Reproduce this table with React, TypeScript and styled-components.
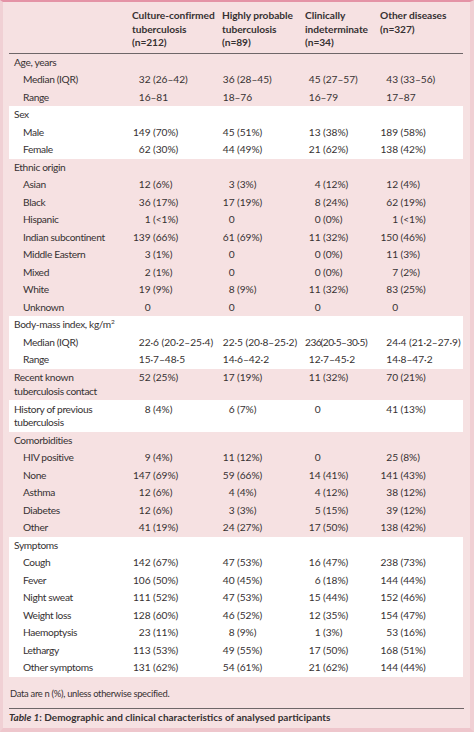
import React from "react";
import styled, { createGlobalStyle } from "styled-components";

const Global = createGlobalStyle`
  html, body { margin: 0; padding: 0; background: #f6e1e2; }
  * { box-sizing: border-box; }
`;

const PINK = "#f6e1e2";
const TEXT = "#363132";
const FONT = `Lato, "Liberation Sans", Arial, sans-serif`;

const Page = styled.div`
  width: 474px;
  height: 732px;
  background: ${PINK};
  border-top: 2px solid #e493a6;
  border-left: 3px solid #f0d0d4;
  border-right: 4px solid #f0d0d4;
  border-bottom: 4px solid #eec6cc;
  padding: 0 7px 0 6px;
  font-family: ${FONT};
  color: ${TEXT};
  display: flex;
  flex-direction: column;
  overflow: hidden;
`;

const Table = styled.div`
  width: 454px;
  display: flex;
  flex-direction: column;
`;

const COLS = "123px 90px 83px 75px 83px";

const HeaderRow = styled.div`
  display: grid;
  grid-template-columns: ${COLS};
  padding: 7px 0 3px;
  border-bottom: 1px solid #6e6668;
`;

const HeaderCell = styled.div`
  font-weight: 700;
  font-size: 10.2px;
  line-height: 13.5px;
  white-space: pre;
  letter-spacing: -0.05px;
`;

const Section = styled.div<{ $white?: boolean }>`
  background: ${(p) => (p.$white ? "#ffffff" : "transparent")};
`;

const Row = styled.div<{ $tall?: boolean }>`
  display: grid;
  grid-template-columns: ${COLS};
  height: ${(p) => (p.$tall ? "31.5px" : "17.5px")};
  align-items: ${(p) => (p.$tall ? "start" : "center")};
  padding-top: ${(p) => (p.$tall ? "2.5px" : "0")};
  font-size: 10.2px;
  line-height: ${(p) => (p.$tall ? "13.5px" : "17.5px")};
`;

const Label = styled.div<{ $indent?: boolean }>`
  padding-left: ${(p) => (p.$indent ? "14px" : "5px")};
  white-space: pre;
  letter-spacing: -0.35px;
`;

const Value = styled.div<{ $tight?: boolean }>`
  white-space: pre;
  letter-spacing: ${(p) => (p.$tight ? "-0.5px" : "-0.05px")};
`;

const Num = styled.span<{ $w: number }>`
  display: inline-block;
  width: ${(p) => p.$w}px;
  text-align: right;
`;

const Note = styled.div`
  font-size: 9.4px;
  line-height: 12px;
  letter-spacing: -0.3px;
  padding: 11px 0 0 1px;
`;

const CaptionRule = styled.div`
  margin-top: 8px;
  height: 1px;
  width: 455px;
  background: #6e6668;
`;

const Caption = styled.div`
  font-size: 10px;
  font-weight: 700;
  line-height: 13px;
  padding-top: 2px;
  white-space: nowrap;
  em { font-style: italic; }
`;

const Sup = styled.sup`
  font-size: 6.5px;
  vertical-align: 4px;
  line-height: 0;
`;

type R = { label: React.ReactNode; indent?: boolean; v: string[]; tall?: boolean };
type S = { white?: boolean; rows: R[] };

const sections: S[] = [
  {
    rows: [
      { label: "Age, years", v: ["", "", "", ""] },
      { label: "Median (IQR)", indent: true, v: ["32 (26–42)", "36 (28–45)", "45 (27–57)", "43 (33–56)"] },
      { label: "Range", indent: true, v: ["16–81", "18–76", "16–79", "17–87"] },
    ],
  },
  {
    white: true,
    rows: [
      { label: "Sex", v: ["", "", "", ""] },
      { label: "Male", indent: true, v: ["149 (70%)", "45 (51%)", "13 (38%)", "189 (58%)"] },
      { label: "Female", indent: true, v: ["62 (30%)", "44 (49%)", "21 (62%)", "138 (42%)"] },
    ],
  },
  {
    rows: [
      { label: "Ethnic origin", v: ["", "", "", ""] },
      { label: "Asian", indent: true, v: ["12 (6%)", "3 (3%)", "4 (12%)", "12 (4%)"] },
      { label: "Black", indent: true, v: ["36 (17%)", "17 (19%)", "8 (24%)", "62 (19%)"] },
      { label: "Hispanic", indent: true, v: ["1 (<1%)", "0", "0 (0%)", "1 (<1%)"] },
      { label: "Indian subcontinent", indent: true, v: ["139 (66%)", "61 (69%)", "11 (32%)", "150 (46%)"] },
      { label: "Middle Eastern", indent: true, v: ["3 (1%)", "0", "0 (0%)", "11 (3%)"] },
      { label: "Mixed", indent: true, v: ["2 (1%)", "0", "0 (0%)", "7 (2%)"] },
      { label: "White", indent: true, v: ["19 (9%)", "8 (9%)", "11 (32%)", "83 (25%)"] },
      { label: "Unknown", indent: true, v: ["0", "0", "0", "0"] },
    ],
  },
  {
    white: true,
    rows: [
      {
        label: (
          <>
            Body-mass index, kg/m<Sup>2</Sup>
          </>
        ),
        v: ["", "", "", ""],
      },
      { label: "Median (IQR)", indent: true, v: ["22·6 (20·2–25·4)", "22·5 (20·8–25·2)", "236(20·5–30·5)", "24·4 (21·2–27·9)"] },
      { label: "Range", indent: true, v: ["15·7–48·5", "14·6–42·2", "12·7–45·2", "14·8–47·2"] },
    ],
  },
  {
    rows: [{ label: "Recent known\ntuberculosis contact", tall: true, v: ["52 (25%)", "17 (19%)", "11 (32%)", "70 (21%)"] }],
  },
  {
    white: true,
    rows: [{ label: "History of previous\ntuberculosis", tall: true, v: ["8 (4%)", "6 (7%)", "0", "41 (13%)"] }],
  },
  {
    rows: [
      { label: "Comorbidities", v: ["", "", "", ""] },
      { label: "HIV positive", indent: true, v: ["9 (4%)", "11 (12%)", "0", "25 (8%)"] },
      { label: "None", indent: true, v: ["147 (69%)", "59 (66%)", "14 (41%)", "141 (43%)"] },
      { label: "Asthma", indent: true, v: ["12 (6%)", "4 (4%)", "4 (12%)", "38 (12%)"] },
      { label: "Diabetes", indent: true, v: ["12 (6%)", "3 (3%)", "5 (15%)", "39 (12%)"] },
      { label: "Other", indent: true, v: ["41 (19%)", "24 (27%)", "17 (50%)", "138 (42%)"] },
    ],
  },
  {
    white: true,
    rows: [
      { label: "Symptoms", v: ["", "", "", ""] },
      { label: "Cough", indent: true, v: ["142 (67%)", "47 (53%)", "16 (47%)", "238 (73%)"] },
      { label: "Fever", indent: true, v: ["106 (50%)", "40 (45%)", "6 (18%)", "144 (44%)"] },
      { label: "Night sweat", indent: true, v: ["111 (52%)", "47 (53%)", "15 (44%)", "152 (46%)"] },
      { label: "Weight loss", indent: true, v: ["128 (60%)", "46 (52%)", "12 (35%)", "154 (47%)"] },
      { label: "Haemoptysis", indent: true, v: ["23 (11%)", "8 (9%)", "1 (3%)", "53 (16%)"] },
      { label: "Lethargy", indent: true, v: ["113 (53%)", "49 (55%)", "17 (50%)", "168 (51%)"] },
      { label: "Other symptoms", indent: true, v: ["131 (62%)", "54 (61%)", "21 (62%)", "144 (44%)"] },
    ],
  },
];

const NUM_W = [18.5, 12.5, 15.5, 18];

function Cell({ text, col }: { text: string; col: number }) {
  if (!text) return <Value />;
  const m = text.match(/^(\d+)(.*)$/);
  if (!m) return <Value>{text}</Value>;
  const tight = m[2].startsWith("(");
  return (
    <Value $tight={tight}>
      <Num $w={NUM_W[col]}>{m[1]}</Num>
      {m[2]}
    </Value>
  );
}

const headers = [
  "",
  "Culture-confirmed\ntuberculosis\n(n=212)",
  "Highly probable\ntuberculosis\n(n=89)",
  "Clinically\nindeterminate\n(n=34)",
  "Other diseases\n(n=327)",
];

export default function App() {
  return (
    <>
      <Global />
      <Page>
        <Table>
          <HeaderRow>
            {headers.map((h, i) => (
              <HeaderCell key={i}>{h}</HeaderCell>
            ))}
          </HeaderRow>
          {sections.map((s, si) => (
            <Section key={si} $white={s.white}>
              {s.rows.map((r, ri) => (
                <Row key={ri} $tall={r.tall}>
                  <Label $indent={r.indent}>{r.label}</Label>
                  {r.v.map((t, ci) => (
                    <Cell key={ci} text={t} col={ci} />
                  ))}
                </Row>
              ))}
            </Section>
          ))}
        </Table>
        <Note>Data are n (%), unless otherwise specified.</Note>
        <CaptionRule />
        <Caption>
          <em>Table 1</em>: Demographic and clinical characteristics of analysed participants
        </Caption>
      </Page>
    </>
  );
}
